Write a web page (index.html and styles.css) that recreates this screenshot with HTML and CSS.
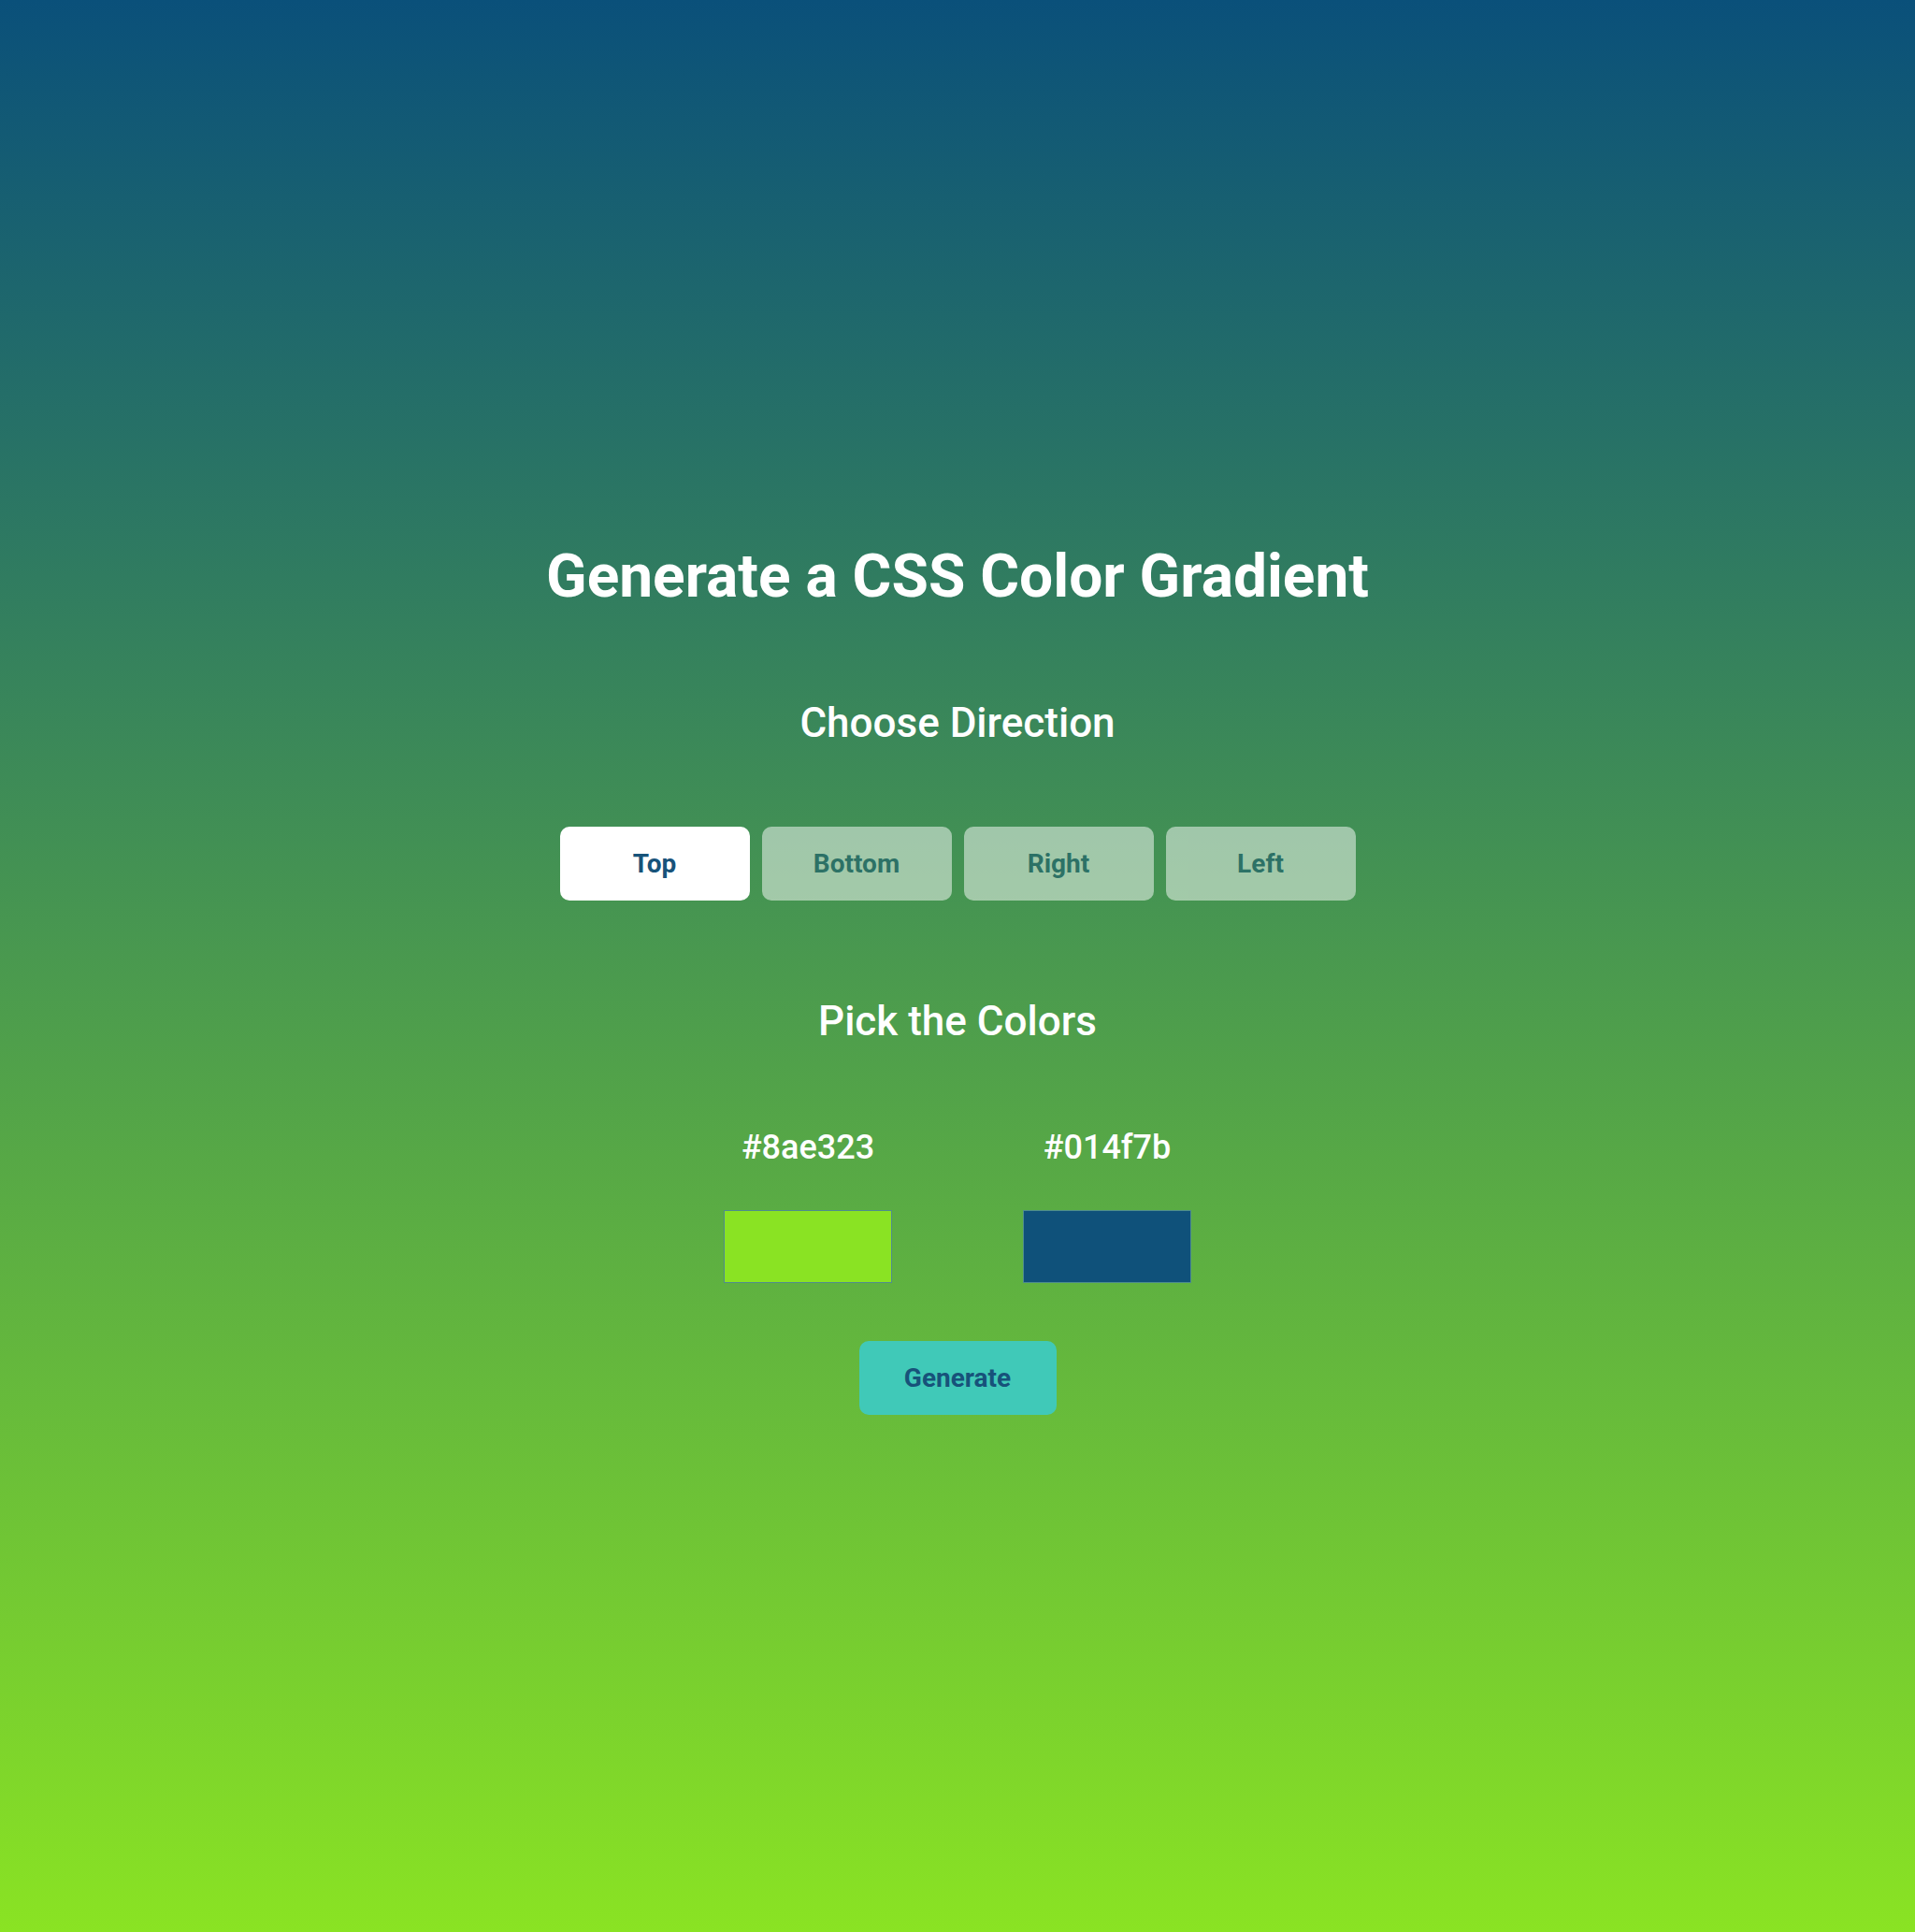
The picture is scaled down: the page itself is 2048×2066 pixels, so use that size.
FILE: index.html
```html
<!DOCTYPE html>
<html lang="en">
<head>
<meta charset="utf-8">
<title>CSS Color Gradient Generator</title>
<link rel="stylesheet" href="styles.css">
</head>
<body>
<main class="page">
  <h1 class="title">Generate a CSS Color Gradient</h1>
  <h2 class="subtitle subtitle-direction">Choose Direction</h2>
  <div class="directions">
    <button class="dir-btn active" type="button">Top</button>
    <button class="dir-btn" type="button">Bottom</button>
    <button class="dir-btn" type="button">Right</button>
    <button class="dir-btn" type="button">Left</button>
  </div>
  <h2 class="subtitle subtitle-colors">Pick the Colors</h2>
  <div class="colors">
    <div class="color-col">
      <span class="color-label">#8ae323</span>
      <input class="color-input" type="color" value="#8ae323">
    </div>
    <div class="color-col">
      <span class="color-label">#014f7b</span>
      <input class="color-input" type="color" value="#0f517a">
    </div>
  </div>
  <button class="generate-btn" type="button">Generate</button>
</main>
</body>
</html>
```

FILE: styles.css
```css
html, body {
  margin: 0;
  padding: 0;
}

body {
  min-height: 100vh;
  background: linear-gradient(to top, #8ae323, #0a507a);
  font-family: Roboto, "Liberation Sans", Arial, sans-serif;
  color: #ffffff;
}

.page {
  min-height: 100vh;
  display: flex;
  flex-direction: column;
  align-items: center;
  justify-content: center;
  box-sizing: border-box;
  padding-top: 26px;
}

.title {
  margin: 0;
  font-size: 64px;
  font-weight: 700;
  line-height: 75px;
}

.subtitle {
  margin: 0;
  font-size: 44px;
  font-weight: 500;
  line-height: 52px;
}

.subtitle-direction {
  margin-top: 93px;
}

.directions {
  margin-top: 85px;
  display: flex;
  gap: 13px;
}

.dir-btn {
  width: 203px;
  height: 79px;
  border: none;
  border-radius: 10px;
  background: #ffffff;
  color: #17537a;
  font-family: Roboto, "Liberation Sans", Arial, sans-serif;
  font-size: 28px;
  font-weight: 700;
  opacity: 0.5;
  cursor: pointer;
  padding: 0;
}

.dir-btn.active {
  opacity: 1;
}

.subtitle-colors {
  margin-top: 103px;
}

.colors {
  margin-top: 88px;
  display: flex;
  gap: 140px;
}

.color-col {
  display: flex;
  flex-direction: column;
  align-items: center;
  gap: 46px;
}

.color-label {
  font-size: 36px;
  font-weight: 500;
  line-height: 42px;
}

.color-input {
  -webkit-appearance: none;
  appearance: none;
  width: 180px;
  height: 78px;
  padding: 0;
  margin: 0;
  border: none;
  background: none;
  cursor: pointer;
  display: block;
}

.color-input::-webkit-color-swatch-wrapper {
  padding: 0;
}

.color-input::-webkit-color-swatch {
  border: 1px solid #4f8d8d;
  border-radius: 0;
}

.generate-btn {
  margin-top: 62px;
  width: 211px;
  height: 79px;
  border: none;
  border-radius: 10px;
  background: #40c9b8;
  color: #17527a;
  font-family: Roboto, "Liberation Sans", Arial, sans-serif;
  font-size: 28px;
  font-weight: 700;
  padding: 0;
  cursor: pointer;
}
```
